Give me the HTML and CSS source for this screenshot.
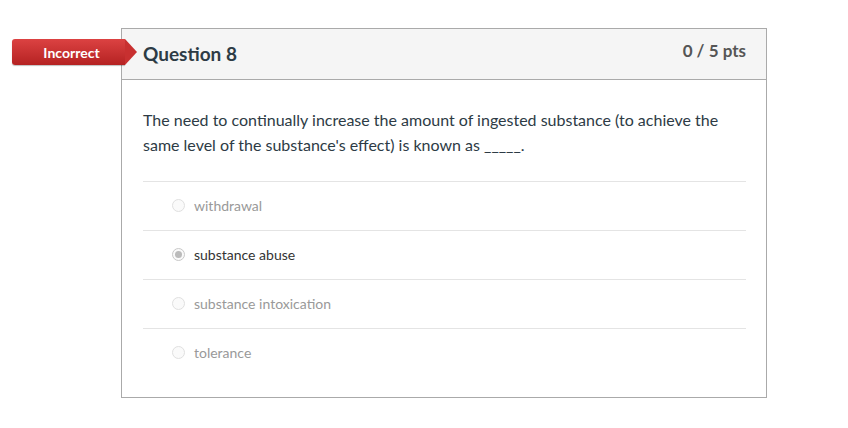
FILE: index.html
```html
<!DOCTYPE html>
<html lang="en">
<head>
<meta charset="utf-8">
<title>Question 8</title>
<link rel="stylesheet" href="styles.css">
</head>
<body>
<div class="question">
  <div class="badge">Incorrect</div>
  <div class="q-header">
    <h2 class="q-title">Question 8</h2>
    <div class="q-points">0 / 5 pts</div>
  </div>
  <div class="q-body">
    <p class="q-text">The need to continually increase the amount of ingested substance (to achieve the same level of the substance's effect) is known as _____.</p>
    <div class="answers">
      <div class="answer"><span class="radio"></span><span class="label">withdrawal</span></div>
      <div class="answer selected"><span class="radio"></span><span class="label">substance abuse</span></div>
      <div class="answer"><span class="radio"></span><span class="label">substance intoxication</span></div>
      <div class="answer"><span class="radio"></span><span class="label">tolerance</span></div>
    </div>
  </div>
</div>
</body>
</html>
```
FILE: styles.css
```css
* { box-sizing: border-box; }
html, body { margin: 0; padding: 0; background: #fff; }
body {
  font-family: Lato, "Open Sans", sans-serif;
  color: #2d3b45;
  padding: 28px 0 0 121px;
}
.question {
  position: relative;
  width: 646px;
  height: 370px;
  border: 1px solid #aaaaaa;
}
.badge {
  position: absolute;
  left: -110px;
  top: 10px;
  height: 26px;
  width: 113px;
  display: flex;
  align-items: center;
  justify-content: center;
  padding-left: 6px;
  color: #fff;
  font-weight: 700;
  font-size: 14px;
  background: linear-gradient(#dc4242, #b52222);
  border-radius: 3px 0 0 3px;
  box-shadow: 0 1px 1px rgba(0,0,0,0.25);
}
.badge::after {
  content: "";
  position: absolute;
  right: -12px;
  top: 0;
  border-top: 13px solid transparent;
  border-bottom: 13px solid transparent;
  border-left: 12px solid #c83030;
}
.q-header {
  height: 51px;
  background: #f5f5f5;
  border-bottom: 1px solid #aaaaaa;
  display: flex;
  justify-content: space-between;
  padding: 0 20px 0 21px;
}
.q-title {
  margin: 0;
  font-size: 19px;
  font-weight: 700;
  color: #2d3b45;
  line-height: 1;
  padding-top: 15px;
}
.q-points {
  font-size: 17px;
  font-weight: 700;
  color: #555;
  padding-top: 11px;
}
.q-body {
  padding: 27px 20px 0 21px;
}
.q-text {
  margin: 0 0 24px;
  font-size: 16px;
  line-height: 25px;
}
.answer {
  height: 49px;
  border-top: 1px solid #e4e4e4;
  display: flex;
  align-items: center;
  padding-left: 29px;
  padding-bottom: 2px;
  font-size: 14px;
  color: #999;
}
.answer.selected { color: #333; }
.radio {
  width: 13px;
  height: 13px;
  border-radius: 50%;
  border: 1px solid #e0e0e0;
  background: #fafafa;
  margin-right: 9px;
  position: relative;
}
.answer.selected .radio { border-color: #c8c8c8; }
.answer.selected .radio::after {
  content: "";
  position: absolute;
  left: 2px;
  top: 2px;
  width: 7px;
  height: 7px;
  border-radius: 50%;
  background: #bbbbbb;
}
```
